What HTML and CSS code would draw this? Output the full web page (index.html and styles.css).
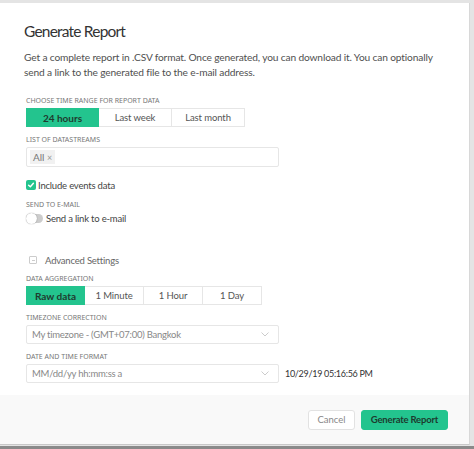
FILE: index.html
```html
<!DOCTYPE html>
<html lang="en">
<head>
    <meta charset="UTF-8">
    <meta name="viewport" content="width=device-width, initial-scale=1.0">
    <title>Generate Report</title>
    <link rel="stylesheet" href="styles.css">
</head>
<body>
    <div class="modal">
        <div class="modal-body">
            <h1>Generate Report</h1>
            <p class="intro">Get a complete report in .CSV format. Once generated, you can download it. You can optionally send a link to the generated file to the e-mail address.</p>

            <div class="field">
                <div class="field-label">Choose time range for report data</div>
                <div class="segmented range">
                    <button class="active">24 hours</button>
                    <button>Last week</button>
                    <button>Last month</button>
                </div>
            </div>

            <div class="field">
                <div class="field-label">List of datastreams</div>
                <div class="input tags">
                    <span class="tag">All <span class="tag-x">&times;</span></span>
                </div>
            </div>

            <label class="check">
                <span class="box checked">
                    <svg width="8" height="8" viewBox="0 0 10 10"><path d="M2 5.2 L4.2 7.2 L8 2.8" fill="none" stroke="#fff" stroke-width="1.8" stroke-linecap="round" stroke-linejoin="round"/></svg>
                </span>
                Include events data
            </label>

            <div class="field-label">Send to e-mail</div>
            <label class="switch-row">
                <span class="switch"><span class="knob"></span></span>
                Send a link to e-mail
            </label>

            <label class="check advanced">
                <span class="box small">
                    <svg width="5" height="5" viewBox="0 0 5 5"><path d="M1 2.5 H4" stroke="#ccc" stroke-width="1"/></svg>
                </span>
                Advanced Settings
            </label>

            <div class="field">
                <div class="field-label">Data aggregation</div>
                <div class="segmented agg">
                    <button class="active">Raw data</button>
                    <button>1 Minute</button>
                    <button>1 Hour</button>
                    <button>1 Day</button>
                </div>
            </div>

            <div class="field">
                <div class="field-label">Timezone correction</div>
                <div class="input select">
                    <span>My timezone - (GMT+07:00) Bangkok</span>
                    <svg class="chevron" width="8" height="5" viewBox="0 0 8 5"><path d="M0.5 0.5 L4 4 L7.5 0.5" fill="none" stroke="#ccc" stroke-width="1"/></svg>
                </div>
            </div>

            <div class="field">
                <div class="field-label">Date and time format</div>
                <div class="format-row">
                    <div class="input select">
                        <span>MM/dd/yy hh:mm:ss a</span>
                        <svg class="chevron" width="8" height="5" viewBox="0 0 8 5"><path d="M0.5 0.5 L4 4 L7.5 0.5" fill="none" stroke="#ccc" stroke-width="1"/></svg>
                    </div>
                    <span class="preview">10/29/19 05:16:56 PM</span>
                </div>
            </div>
        </div>

        <div class="modal-footer">
            <button class="btn">Cancel</button>
            <button class="btn primary">Generate Report</button>
        </div>
    </div>
</body>
</html>
```

FILE: styles.css
```css
body {
    margin: 0;
    background: #e4e4e4;
    font-family: "Lato", sans-serif;
    color: #444;
    height: 449px;
    overflow: hidden;
    border-bottom: 3px solid #8a8a8a;
    box-sizing: border-box;
}

.modal {
    background: white;
    margin: 3px 4px 0 0;
    height: 442px;
    border-right: 1px solid #d8d8d8;
    border-bottom: 1px solid #c8c8c8;
    box-sizing: border-box;
    display: flex;
    flex-direction: column;
}

.modal-body {
    padding: 18px 24px 0 26px;
    flex: 1;
}

h1 {
    font-weight: 400;
    font-size: 15.5px;
    line-height: 20px;
    letter-spacing: -0.8px;
    color: #333;
    margin: 0 0 9px -2px;
}

.intro {
    font-size: 10.2px;
    line-height: 15px;
    letter-spacing: -0.15px;
    margin: 0 -8px 16px -2px;
    color: #505050;
}

.field {
    margin-bottom: 8px;
}

.field-label {
    font-family: "Noto Sans", sans-serif;
    font-size: 7px;
    line-height: 9px;
    text-transform: uppercase;
    color: #777;
    margin-bottom: 3px;
}

.segmented {
    display: flex;
}

.segmented button {
    font-family: "Lato", sans-serif;
    font-size: 9.5px;
    letter-spacing: -0.1px;
    color: #555;
    background: white;
    border: 1px solid #e6e6e6;
    border-left: none;
    height: 19px;
    padding: 0;
    cursor: pointer;
}

.segmented button:first-child {
    border-left: 1px solid #e6e6e6;
}

.segmented button.active {
    background: #23c48e;
    border-color: #23c48e;
    color: #1f3b2f;
    font-size: 10px;
    letter-spacing: 0;
    font-weight: 700;
}

.range button {
    width: 73px;
}

.agg button {
    width: 59px;
}

.input {
    border: 1px solid #e6e6e6;
    border-radius: 2px;
    width: 253px;
    height: 19px;
    box-sizing: border-box;
    display: flex;
    align-items: center;
    padding: 0 5px;
    font-size: 9.5px;
    letter-spacing: -0.25px;
    color: #888;
}

.tags {
    height: 20px;
    padding: 0 3px;
}

.tag {
    background: #f1f1f1;
    padding: 1px 3px;
    font-size: 10px;
    letter-spacing: 0;
    color: #777;
}

.tag-x {
    font-size: 9px;
    color: #999;
}

.select {
    justify-content: space-between;
}

.chevron {
    margin-right: 4px;
}

.check {
    display: flex;
    align-items: center;
    gap: 2px;
    height: 12px;
    font-size: 9.5px;
    letter-spacing: -0.2px;
    color: #444;
    margin: 12px 0 9px;
}

.box {
    width: 10px;
    height: 10px;
    border-radius: 2px;
    display: flex;
    align-items: center;
    justify-content: center;
}

.box.checked {
    background: #23c48e;
}

.box.small {
    width: 6px;
    height: 6px;
    border: 1px solid #ccc;
    border-radius: 1px;
    margin: 0 6px 0 3px;
}

.advanced {
    color: #666;
    margin: 30px 0 8px;
}

.switch-row {
    display: flex;
    align-items: center;
    gap: 3px;
    height: 12px;
    margin-top: 3px;
    font-size: 9.5px;
    letter-spacing: -0.2px;
    color: #444;
}

.switch {
    width: 17px;
    height: 9px;
    border-radius: 5px;
    background: #ccc;
    position: relative;
}

.knob {
    position: absolute;
    left: 0;
    top: -1px;
    width: 11px;
    height: 11px;
    border-radius: 50%;
    background: white;
    box-shadow: 0 0 1px rgba(0, 0, 0, 0.5);
}

.format-row {
    display: flex;
    align-items: center;
    gap: 6px;
}

.preview {
    font-size: 9px;
    letter-spacing: -0.3px;
    color: #333;
}

.modal-footer {
    background: #f9f9f9;
    height: 49px;
    display: flex;
    justify-content: flex-end;
    align-items: center;
    gap: 6px;
    padding-right: 21px;
}

.btn {
    font-family: "Lato", sans-serif;
    font-size: 9.5px;
    height: 20px;
    border-radius: 3px;
    border: 1px solid #e2e2e2;
    background: white;
    color: #888;
    width: 47px;
    padding: 0;
    cursor: pointer;
}

.btn.primary {
    background: #23c48e;
    border-color: #23c48e;
    color: #1d3a2e;
    font-weight: 700;
    letter-spacing: -0.2px;
    width: 87px;
}
```
